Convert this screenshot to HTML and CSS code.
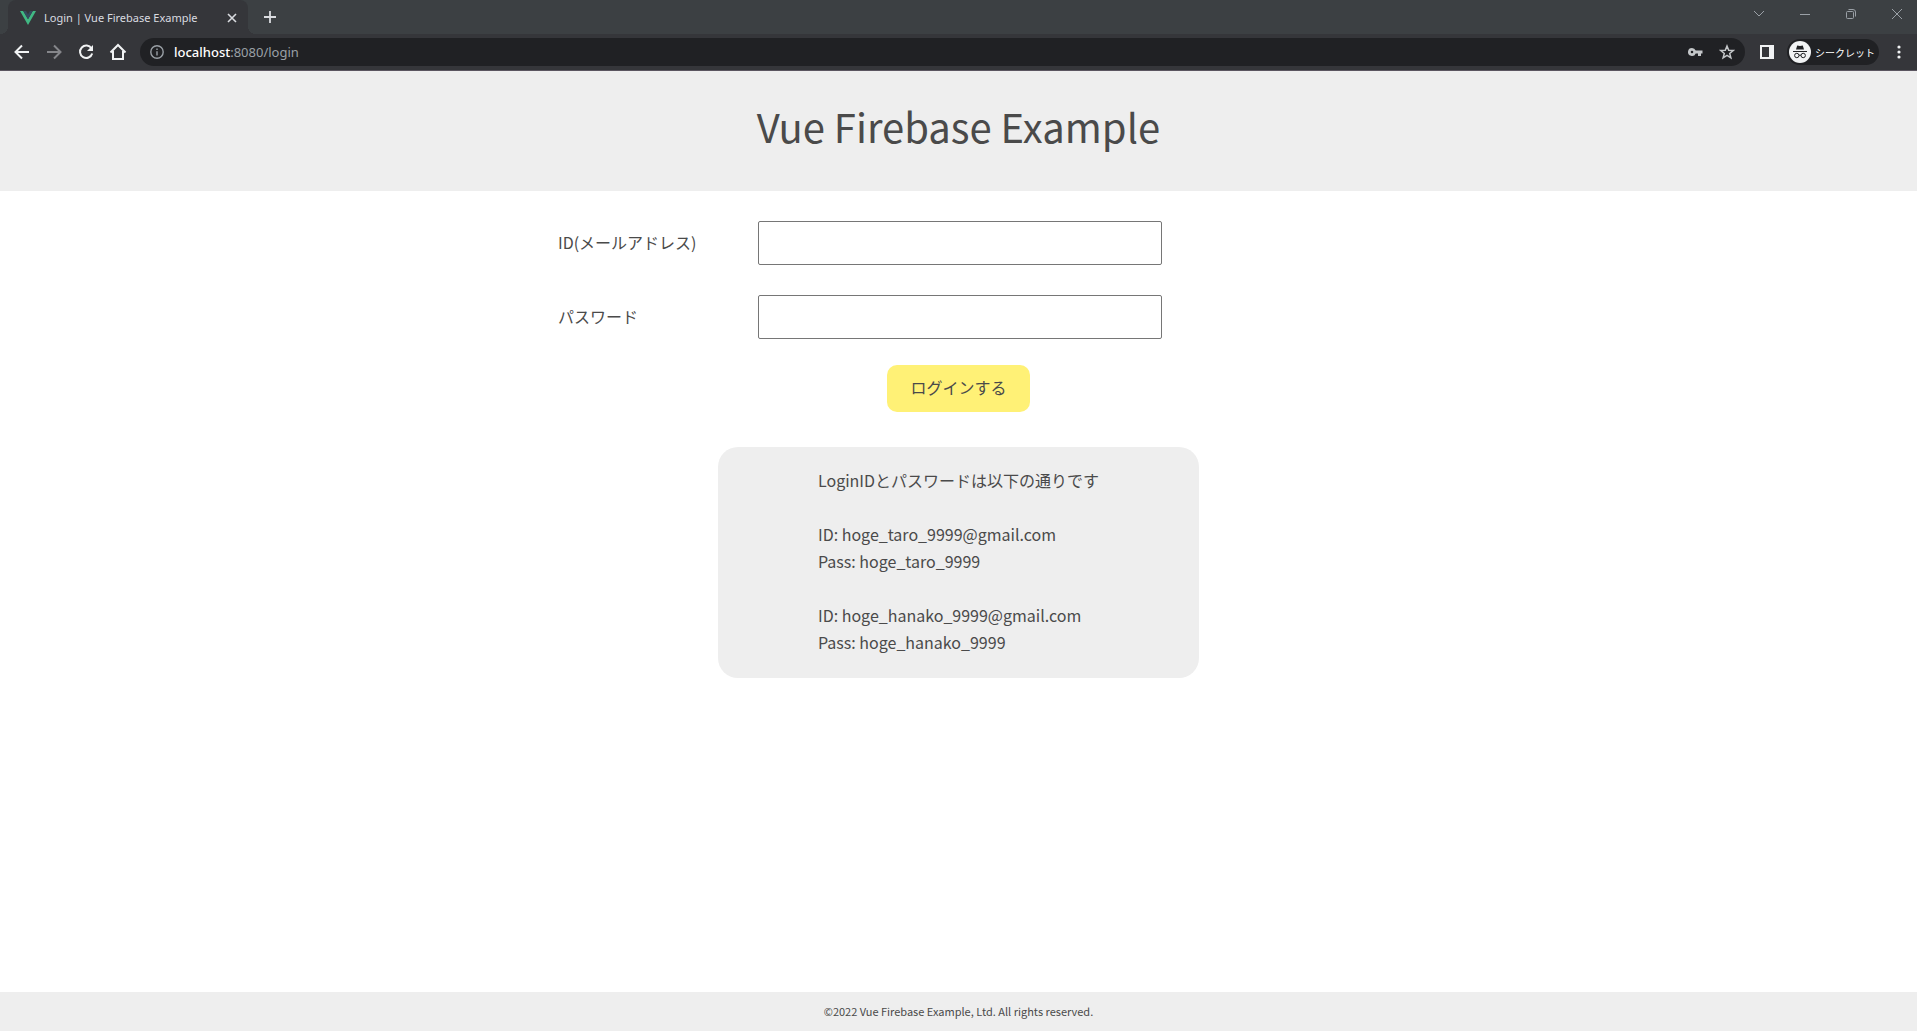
FILE: index.html
```html
<!DOCTYPE html>
<html lang="ja">
<head>
    <meta charset="UTF-8">
    <meta name="viewport" content="width=device-width, initial-scale=1.0">
    <title>Login | Vue Firebase Example</title>
    <link rel="stylesheet" href="styles.css">
</head>
<body>

<div class="browser">
    <div class="tab-bar">
        <div class="tab">
            <svg class="favicon" width="16" height="16" viewBox="0 0 16 16">
                <path d="M0 1h3.2L8 9.300 12.800 1H16L8 15z" fill="#41b883"/>
                <path d="M3.200 1H6l2 3.500L10 1h2.800L8 9.300z" fill="#35495e"/>
            </svg>
            <span class="tab-title">Login | Vue Firebase Example</span>
            <button class="icon-button" aria-label="タブを閉じる">
                <svg width="10" height="10" viewBox="0 0 10 10" stroke="#dadce0" stroke-width="1.600"><path d="M1 1l8 8M9 1l-8 8"/></svg>
            </button>
        </div>
        <button class="icon-button new-tab" aria-label="新しいタブ">
            <svg width="12" height="12" viewBox="0 0 12 12" stroke="#dadce0" stroke-width="1.800"><path d="M6 0v12M0 6h12"/></svg>
        </button>
        <div class="window-controls">
            <button class="icon-button" aria-label="タブを検索">
                <svg width="12" height="12" viewBox="0 0 12 12" fill="none" stroke="#9aa0a6"><path d="M1 3l5 5 5-5"/></svg>
            </button>
            <button class="icon-button" aria-label="最小化">
                <svg width="12" height="12" viewBox="0 0 12 12" stroke="#9aa0a6"><path d="M1 6.500h10"/></svg>
            </button>
            <button class="icon-button" aria-label="元に戻す">
                <svg width="12" height="12" viewBox="0 0 12 12" fill="none" stroke="#9aa0a6"><rect x="1.500" y="3.500" width="7" height="7" rx="1"/><path d="M3.500 1.500H8a2.500 2.500 0 0 1 2.500 2.500v4.500"/></svg>
            </button>
            <button class="icon-button" aria-label="閉じる">
                <svg width="12" height="12" viewBox="0 0 12 12" stroke="#9aa0a6"><path d="M1 1l10 10M11 1L1 11"/></svg>
            </button>
        </div>
    </div>

    <div class="toolbar">
        <button class="icon-button" aria-label="戻る">
            <svg width="16" height="16" viewBox="0 0 16 16" fill="none" stroke="#f1f3f4" stroke-width="2"><path d="M15 8H2M8 1.500L1.500 8 8 14.500"/></svg>
        </button>
        <button class="icon-button" aria-label="進む">
            <svg width="16" height="16" viewBox="0 0 16 16" fill="none" stroke="#85868a" stroke-width="2"><path d="M1 8h13M8 1.500L14.500 8 8 14.500"/></svg>
        </button>
        <button class="icon-button" aria-label="再読み込み">
            <svg width="16" height="16" viewBox="0 0 16 16" fill="none" stroke="#f1f3f4" stroke-width="2"><path d="M13.500 4.500a6.200 6.200 0 1 0 .7 5"/><path d="M15 1v6H9z" fill="#f1f3f4" stroke="none"/></svg>
        </button>
        <button class="icon-button" aria-label="ホーム">
            <svg width="18" height="18" viewBox="0 0 18 18" fill="none" stroke="#f1f3f4" stroke-width="2"><path d="M1.500 9.500L9 2l7.500 7.500M4 8v8h10V8"/></svg>
        </button>
        <div class="address-bar">
            <svg width="14" height="14" viewBox="0 0 14 14" fill="none" stroke="#9aa0a6" stroke-width="1.400"><circle cx="7" cy="7" r="6.200"/><path d="M7 6.200v4.300M7 3.400v1.600"/></svg>
            <span class="url"><span class="host">localhost</span>:8080/login</span>
            <svg width="16" height="16" viewBox="0 0 16 16" fill="#c4c7c9"><path d="M5 4a4 4 0 1 0 3.700 5.500H11V12h3V9.500h1.500v-3H8.700A4 4 0 0 0 5 4zm0 2.700a1.300 1.300 0 1 1 0 2.600 1.300 1.300 0 0 1 0-2.600z"/></svg>
            <svg width="16" height="16" viewBox="0 0 16 16" fill="none" stroke="#c4c7c9" stroke-width="1.500"><path d="M8 2l1.700 4.200 4.500.3-3.500 2.900 1.200 4.400L8 11.400l-3.900 2.400 1.200-4.400-3.500-2.900 4.500-.3z"/></svg>
        </div>
        <button class="icon-button side-panel" aria-label="サイドパネル">
            <svg width="14" height="14" viewBox="0 0 14 14"><path d="M0 0h14v14H0zM2 2v10h7V2z" fill="#f1f3f4" fill-rule="evenodd"/></svg>
        </button>
        <button class="incognito">
            <svg width="22" height="22" viewBox="0 0 22 22">
                <circle cx="11" cy="11" r="11" fill="#f1f3f4"/>
                <path d="M7 8.500l1.200-4 2.800.6 2.800-.6 1.200 4z" fill="#202124"/>
                <path d="M4 10.500h14" stroke="#202124"/>
                <g fill="none" stroke="#202124"><circle cx="7.800" cy="14.500" r="2.200"/><circle cx="14.200" cy="14.500" r="2.200"/><path d="M10 14.200h2"/></g>
            </svg>
            <span>シークレット</span>
        </button>
        <button class="icon-button" aria-label="メニュー">
            <svg width="4" height="14" viewBox="0 0 4 14" fill="#f1f3f4"><circle cx="2" cy="2" r="1.600"/><circle cx="2" cy="7" r="1.600"/><circle cx="2" cy="12" r="1.600"/></svg>
        </button>
    </div>
</div>

<header>
    <h1>Vue Firebase Example</h1>
</header>

<main>
    <form class="login-form">
        <div class="field">
            <label for="email">ID(メールアドレス)</label>
            <input type="email" id="email">
        </div>
        <div class="field">
            <label for="password">パスワード</label>
            <input type="password" id="password">
        </div>
        <button type="button" class="login-button">ログインする</button>
    </form>

    <div class="account-info">
        <p>LoginIDとパスワードは以下の通りです</p>
        <p>ID: hoge_taro_9999@gmail.com<br>Pass: hoge_taro_9999</p>
        <p>ID: hoge_hanako_9999@gmail.com<br>Pass: hoge_hanako_9999</p>
    </div>
</main>

<footer>
    <small>©2022 Vue Firebase Example, Ltd. All rights reserved.</small>
</footer>

</body>
</html>
```

FILE: styles.css
```css
* {
    box-sizing: border-box;
}
body {
    display: flex;
    flex-direction: column;
    min-height: 100vh;
    margin: 0;
    background: #fff;
    color: #4a4a4a;
    font-family: "Noto Sans CJK JP", sans-serif;
    font-size: 16px;
    line-height: 27px;
}
button {
    border: none;
    padding: 0;
    background: none;
    font-family: inherit;
    cursor: pointer;
}
svg {
    display: block;
    flex: none;
}

/* browser window */
.browser {
    background: #35363a;
    border-bottom: 1px solid #5b5560;
    font-family: "Noto Sans", "Noto Sans CJK JP", sans-serif;
    line-height: 18px;
}
.tab-bar {
    display: flex;
    height: 34px;
    padding-left: 8px;
    background: #3c4043;
}
.tab {
    position: relative;
    display: flex;
    align-items: center;
    width: 240px;
    padding: 1px 4px 0 12px;
    border-radius: 8px 8px 0 0;
    background: #35363a;
    color: #dadce0;
    font-size: 11px;
}
/* curved feet of the active tab */
.tab::before,
.tab::after {
    content: "";
    position: absolute;
    bottom: 0;
    width: 8px;
    height: 8px;
}
.tab::before {
    right: 100%;
    background: radial-gradient(circle at 0 0, #3c4043 8px, #35363a 8px);
}
.tab::after {
    left: 100%;
    background: radial-gradient(circle at 100% 0, #3c4043 8px, #35363a 8px);
}
.tab-title {
    flex: 1;
    margin-left: 8px;
}
.icon-button {
    display: flex;
    align-items: center;
    justify-content: center;
    width: 24px;
    height: 24px;
}
.new-tab {
    align-self: center;
    margin-left: 10px;
}
.window-controls {
    display: flex;
    margin: 2px 8px 0 auto;
    gap: 22px;
}
.toolbar {
    display: flex;
    align-items: center;
    gap: 8px;
    height: 36px;
    padding: 0 6px 0 10px;
}
.address-bar {
    display: flex;
    flex: 1;
    align-items: center;
    height: 28px;
    margin-left: 2px;
    padding: 0 10px;
    border-radius: 14px;
    background: #202124;
    color: #9aa0a6;
    font-size: 13px;
    gap: 16px;
}
.url {
    flex: 1;
    margin-left: -6px;
}
.host {
    color: #fff;
    font-weight: 500;
}
.side-panel {
    margin-left: 2px;
}
.incognito {
    display: flex;
    align-items: center;
    height: 26px;
    padding: 0 4px 0 2px;
    border-radius: 13px;
    background: #202124;
    color: #fff;
    font-size: 10px;
    gap: 4px;
}

/* page */
header {
    padding: 25px 0 35px;
    background: #eee;
    text-align: center;
}
h1 {
    margin: 0;
    font-size: 40px;
    font-weight: normal;
    line-height: 60px;
}
main {
    flex: 1;
    padding: 30px 0;
}
.login-form {
    display: flex;
    flex-direction: column;
    gap: 30px;
    width: 801px;
    max-width: 100%;
    margin: 0 auto;
}
.field {
    display: flex;
    align-items: center;
}
.field label {
    width: 200px;
    padding-bottom: 2px;
}
.field input {
    width: 404px;
    height: 44px;
    padding: 8px;
    border: 1px solid #767676;
    border-radius: 2px;
    font-size: 16px;
}
.login-button {
    align-self: center;
    margin-top: -4px;
    padding: 9px 23px 11px;
    border-radius: 10px;
    background: #fff176;
    color: #4a4a4a;
    font-size: 16px;
    line-height: 27px;
}
.account-info {
    width: fit-content;
    margin: 35px auto 0;
    padding: 20px 100px 22px;
    border-radius: 20px;
    background: #eee;
}
.account-info p {
    margin: 0 0 27px;
}
.account-info p:last-child {
    margin-bottom: 0;
}
footer {
    padding: 6px 0;
    background: #eee;
    text-align: center;
}
footer small {
    display: block;
    font-size: 11px;
}
```
